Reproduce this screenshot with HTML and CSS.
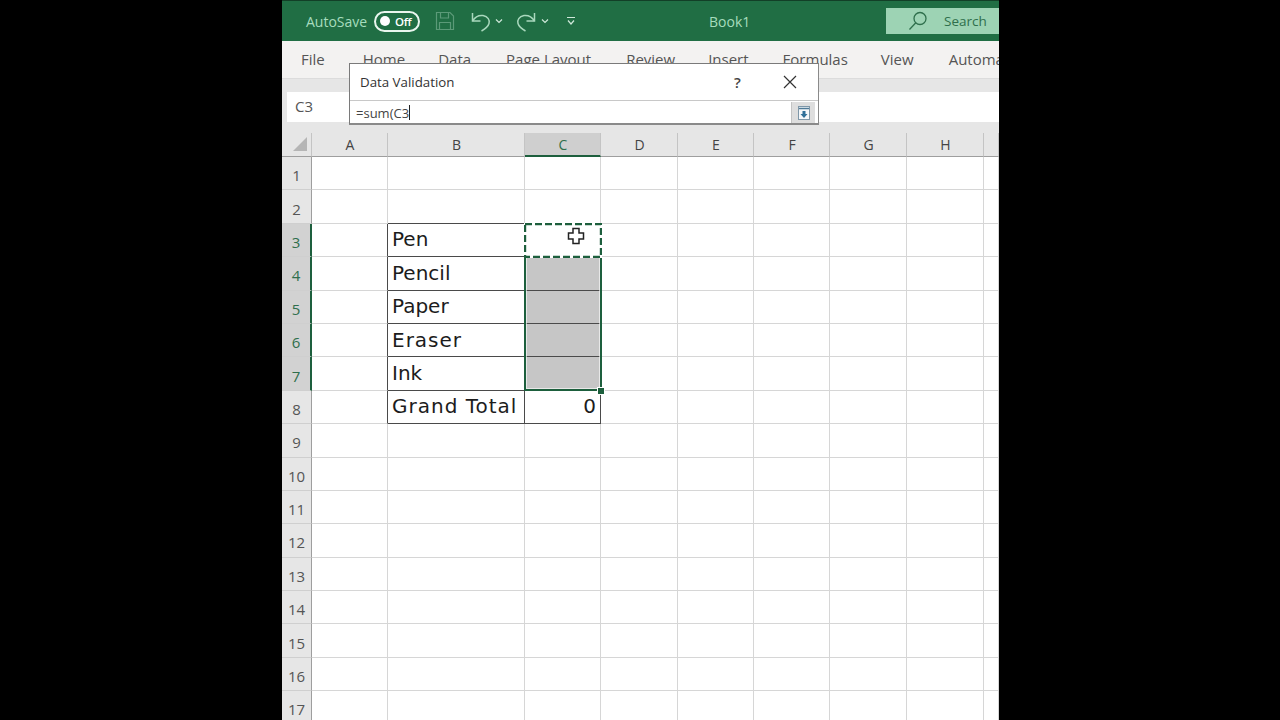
FILE: index.html
```html
<!DOCTYPE html>
<html lang="en">
<head>
<meta charset="utf-8">
<title>Book1 - Excel</title>
<link rel="stylesheet" href="styles.css">
</head>
<body>
<div class="app">
  <header class="titlebar">
    <span class="autosave">AutoSave</span>
    <span class="toggle"><i class="knob"></i><b>Off</b></span>
    <svg class="ic save" width="20" height="20" viewBox="0 0 20 20" fill="none" stroke="#5b9a78" stroke-width="1.2"><path d="M1.5 1.5H15L18.5 5V18.5H1.5Z"/><path d="M5.5 1.5V7H13.5V1.5M4.5 18.5V11.5H15.5V18.5"/></svg>
    <svg class="ic undo" width="22" height="22" viewBox="0 0 22 22" fill="none" stroke="#a9d8bd" stroke-width="1.5"><path d="M2.5 3V11H10.5"/><path d="M2.5 11C5 7 9 5 13 5.500C18 6.500 20 10 19 13.500C18 17 15 19 11.500 21"/></svg>
    <svg class="ic chev" width="8" height="6" viewBox="0 0 8 6" fill="none" stroke="#cfe8da" stroke-width="1.2"><path d="M1 1.500L4 4.500L7 1.500"/></svg>
    <svg class="ic redo" width="22" height="22" viewBox="0 0 22 22" fill="none" stroke="#a9d8bd" stroke-width="1.5"><path d="M19.500 3V11H11.500"/><path d="M19.500 11C17 7 13 5 9 5.500C4 6.500 2 10 3 13.500C4 17 7 19 10.500 21"/></svg>
    <svg class="ic chev2" width="8" height="6" viewBox="0 0 8 6" fill="none" stroke="#cfe8da" stroke-width="1.2"><path d="M1 1.500L4 4.500L7 1.500"/></svg>
    <svg class="ic qat" width="10" height="10" viewBox="0 0 10 10" fill="none" stroke="#cfe8da" stroke-width="1.2"><path d="M1 1.500H9M2 4.500L5 8L8 4.500"/></svg>
    <span class="book">Book1</span>
    <div class="search">
      <svg width="20" height="20" viewBox="0 0 20 20" fill="none" stroke="#2f6f4c" stroke-width="1.300"><circle cx="12" cy="7.500" r="6"/><path d="M7.800 11.800L1.500 18.500"/></svg>
      <span>Search</span>
    </div>
  </header>

  <nav class="tabs">
    <span class="tab t-file">File</span>
    <span class="tab t-home">Home</span>
    <span class="tab t-data">Data</span>
    <span class="tab t-page">Page Layout</span>
    <span class="tab t-review">Review</span>
    <span class="tab t-insert">Insert</span>
    <span class="tab t-formulas">Formulas</span>
    <span class="tab t-view">View</span>
    <span class="tab t-auto">Automate</span>
  </nav>

  <div class="formula">
    <div class="namebox">C3</div>
    <div class="fx"></div>
  </div>

  <main class="sheet">
    <div class="row head">
      <div class="corner"><svg width="14" height="14" viewBox="0 0 14 14"><path d="M14 0V14H0Z" fill="#b5b5b5"/></svg></div>
      <div class="col">A</div><div class="col">B</div><div class="col sel">C</div><div class="col">D</div><div class="col">E</div><div class="col">F</div><div class="col">G</div><div class="col">H</div><div class="col"></div>
    </div>
    <div class="row"><div class="num">1</div><div></div><div></div><div></div><div></div><div></div><div></div><div></div><div></div><div></div></div>
    <div class="row"><div class="num">2</div><div></div><div class="tt"></div><div class="tt"></div><div></div><div></div><div></div><div></div><div></div><div></div></div>
    <div class="row"><div class="num on">3</div><div class="tl"></div><div class="t">Pen</div><div class="t blank"></div><div></div><div></div><div></div><div></div><div></div><div></div></div>
    <div class="row"><div class="num on">4</div><div class="tl"></div><div class="t">Pencil</div><div class="t fill"></div><div></div><div></div><div></div><div></div><div></div><div></div></div>
    <div class="row"><div class="num on">5</div><div class="tl"></div><div class="t">Paper</div><div class="t fill"></div><div></div><div></div><div></div><div></div><div></div><div></div></div>
    <div class="row"><div class="num on">6</div><div class="tl"></div><div class="t wide">Eraser</div><div class="t fill"></div><div></div><div></div><div></div><div></div><div></div><div></div></div>
    <div class="row"><div class="num on">7</div><div class="tl"></div><div class="t">Ink</div><div class="t fill"></div><div></div><div></div><div></div><div></div><div></div><div></div></div>
    <div class="row"><div class="num">8</div><div class="tl"></div><div class="t wide">Grand Total</div><div class="t right">0</div><div></div><div></div><div></div><div></div><div></div><div></div></div>
    <div class="row"><div class="num">9</div><div></div><div></div><div></div><div></div><div></div><div></div><div></div><div></div><div></div></div>
    <div class="row"><div class="num">10</div><div></div><div></div><div></div><div></div><div></div><div></div><div></div><div></div><div></div></div>
    <div class="row"><div class="num">11</div><div></div><div></div><div></div><div></div><div></div><div></div><div></div><div></div><div></div></div>
    <div class="row"><div class="num">12</div><div></div><div></div><div></div><div></div><div></div><div></div><div></div><div></div><div></div></div>
    <div class="row"><div class="num">13</div><div></div><div></div><div></div><div></div><div></div><div></div><div></div><div></div><div></div></div>
    <div class="row"><div class="num">14</div><div></div><div></div><div></div><div></div><div></div><div></div><div></div><div></div><div></div></div>
    <div class="row"><div class="num">15</div><div></div><div></div><div></div><div></div><div></div><div></div><div></div><div></div><div></div></div>
    <div class="row"><div class="num">16</div><div></div><div></div><div></div><div></div><div></div><div></div><div></div><div></div><div></div></div>
    <div class="row"><div class="num">17</div><div></div><div></div><div></div><div></div><div></div><div></div><div></div><div></div><div></div></div>

    <div class="range"></div>
    <svg class="ants" width="78" height="35" viewBox="0 0 78 35" fill="none"><rect x="1" y="1" width="76" height="33" stroke="#fff" stroke-width="2"/><rect x="1" y="1" width="76" height="33" stroke="#1d5f3d" stroke-width="2.400" stroke-dasharray="7 3"/></svg>
    <i class="handle"></i>
    <svg class="cursor" width="18" height="18" viewBox="0 0 18 18"><path d="M6 1.500H12V6H16.500V12H12V16.500H6V12H1.500V6H6Z" fill="#fff" stroke="#222" stroke-width="1.500"/></svg>
  </main>

  <section class="dialog">
    <div class="dlg-title">
      <span class="dlg-name">Data Validation</span>
      <span class="dlg-help">?</span>
      <svg class="dlg-close" width="14" height="14" viewBox="0 0 14 14" fill="none" stroke="#333" stroke-width="1.200"><path d="M1 1L13 13M13 1L1 13"/></svg>
    </div>
    <div class="dlg-input">
      <span class="dlg-text">=sum(C3</span><i class="caret"></i>
      <div class="dlg-btn"><svg width="12" height="14" viewBox="0 0 12 14"><rect x="0.500" y="0.500" width="11" height="13" fill="#f4f7fa" stroke="#7f97a8"/><path d="M1 2.500H11" stroke="#4f7a97" stroke-width="1.500"/><path d="M4.500 5H7.500V8H9.500L6 12L2.500 8H4.500Z" fill="#2f6f99"/></svg></div>
    </div>
  </section>
</div>
</body>
</html>
```
FILE: styles.css
```css
* { box-sizing: border-box; }
html, body { margin: 0; height: 100%; }
body {
  background: #000;
  display: flex;
  justify-content: center;
  overflow: hidden;
  font-family: "Open Sans", "Noto Sans", sans-serif;
}
.app {
  position: relative;
  width: 717px;
  height: 720px;
  margin-left: 1px;
  background: #fff;
  overflow: hidden;
  display: flex;
  flex-direction: column;
  flex: none;
}

/* Title bar */
.titlebar {
  height: 41px;
  flex: none;
  background: #206e44;
  border-top: 1px solid #123f27;
  display: flex;
  align-items: center;
  color: #fff;
}
.autosave { margin-left: 24px; font-size: 14px; color: #a6dcbd; width: 69px; }
.toggle {
  width: 46px; height: 21px;
  border: 2px solid #e9f6ee;
  border-radius: 11px;
  display: flex; align-items: center;
  padding-left: 4px;
  gap: 5px;
  flex: none;
}
.knob { width: 10px; height: 10px; border-radius: 50%; background: #fff; flex: none; }
.toggle b { font-size: 11.500px; font-weight: 600; color: #fff; letter-spacing: -0.300px; }
.ic { flex: none; }
.save { margin-left: 15px; }
.undo { margin-left: 15px; }
.chev { margin-left: 3px; }
.redo { margin-left: 12px; }
.chev2 { margin-left: 4px; }
.qat { margin-left: 17px; }
.book { margin-left: 133px; width: 39px; font-size: 14px; color: #a6dcbd; white-space: nowrap; }
.search {
  margin-left: 138px;
  width: 113px; height: 26px;
  flex: none;
  background: #9dd3b4;
  display: flex; align-items: center;
  padding-left: 22px;
  color: #2f6f4c;
  font-size: 13.500px;
}
.search span { margin-left: 16px; }

/* Ribbon tabs */
.tabs {
  height: 37px;
  flex: none;
  background: #f3f2f1;
  display: flex;
  align-items: center;
  font-size: 15px;
  color: #555;
  white-space: nowrap;
  padding-bottom: 1px;
}
.tab { flex: none; }
.t-file { margin-left: 19px; }
.t-home { margin-left: 38px; }
.t-data { margin-left: 33px; }
.t-page { margin-left: 35px; }
.t-review { margin-left: 35px; }
.t-insert { margin-left: 33px; }
.t-formulas { margin-left: 34px; }
.t-view { margin-left: 33px; }
.t-auto { margin-left: 35px; }

/* Formula bar */
.formula {
  height: 55px;
  flex: none;
  background: #e6e6e6;
  padding: 13px 0 11px 5px;
  display: flex;
  border-top: 1px solid #dcdcdc;
}
.namebox {
  width: 66px;
  background: #fff;
  font-size: 15px;
  color: #555;
  padding-left: 8px;
  line-height: 28px;
}
.fx { flex: 1; background: #fff; }

/* Sheet */
.sheet { position: relative; flex: none; }
.row {
  display: grid;
  grid-template-columns: 30px 76px 137px 76px 77px 76px 76px 77px 77px 15px;
  height: 33.400px;
}
.row > div {
  border-right: 1px solid #d6d6d6;
  border-bottom: 1px solid #d6d6d6;
  min-width: 0;
}
.row.head { height: 24px; background: #e6e6e6; }
.row.head > div { border-right-color: #c4c4c4; border-bottom-color: #9e9e9e; }
.corner { display: flex; justify-content: flex-end; align-items: flex-end; padding: 0 4px 5px 0; }
.col {
  display: flex; align-items: center; justify-content: center;
  font-size: 14px; color: #444;
  padding-left: 1px;
}
.row > .col.sel { background: #cfcfcf; border-bottom: 2px solid #1d5f3d; color: #2f6f4c; }
.row > .num {
  background: #e6e6e6;
  display: flex; align-items: center; justify-content: center;
  font-size: 15px; color: #555;
  padding-top: 4px;
  border-right-color: #9e9e9e;
  border-bottom-color: #cfcfcf;
}
.row > .num.on { background: #d2d2d2; border-right: 2px solid #1d5f3d; color: #2f6f4c; }
.row > .tt { border-bottom-color: #4a4a4a; }
.row > .tl { border-right-color: #4a4a4a; }
.row > .t {
  border-right-color: #4a4a4a;
  border-bottom-color: #4a4a4a;
  font-family: "DejaVu Sans", sans-serif;
  font-size: 20px;
  color: #1c1c1c;
  padding: 0 0 1px 4px;
  display: flex; align-items: center;
  white-space: nowrap;
}
.row > .t.wide { letter-spacing: 1px; }
.row > .t.fill { background: #c6c6c6; }
.row > .t.right { justify-content: flex-end; padding: 0 4px 1px 0; }

.range {
  position: absolute;
  left: 242px; top: 90px;
  width: 78px; height: 168px;
  border: 2px solid #1d5f3d;
  outline: 1px solid rgba(255,255,255,.6);
  outline-offset: -3px;
}
.ants { position: absolute; left: 242px; top: 90px; }
.handle {
  position: absolute;
  left: 316px; top: 255px;
  width: 6px; height: 6px;
  background: #1d5f3d;
  border: 1px solid #fff;
  box-sizing: content-box;
  margin: -1px;
}
.cursor { position: absolute; left: 285px; top: 94px; }

/* Dialog */
.dialog {
  position: absolute;
  left: 67px; top: 63px;
  width: 470px; height: 62px;
  background: #fff;
  border: 1px solid #7a7a7a;
  border-bottom: 2px solid #8a8a8a;
  border-right-color: #8a8a8a;
}
.dlg-title {
  height: 37px;
  display: flex; align-items: center;
  border-bottom: 1px solid #c8c8c8;
  font-size: 13.300px;
  color: #333;
}
.dlg-name { margin-left: 10px; width: 374px; }
.dlg-help { font-size: 15px; font-weight: 600; color: #444; width: 49px; }
.dlg-close { flex: none; }
.dlg-input {
  height: 22px;
  display: flex; align-items: center;
  padding: 1px 0 0 6px;
  font-size: 13px;
  color: #444;
}
.caret { width: 1px; height: 15px; background: #222; flex: none; }
.dlg-btn {
  margin-left: auto;
  margin-right: 3px;
  width: 24px; height: 21px;
  background: #dedede;
  display: flex; align-items: center; justify-content: center;
  border-left: 1px solid #c4c4c4;
}
```
